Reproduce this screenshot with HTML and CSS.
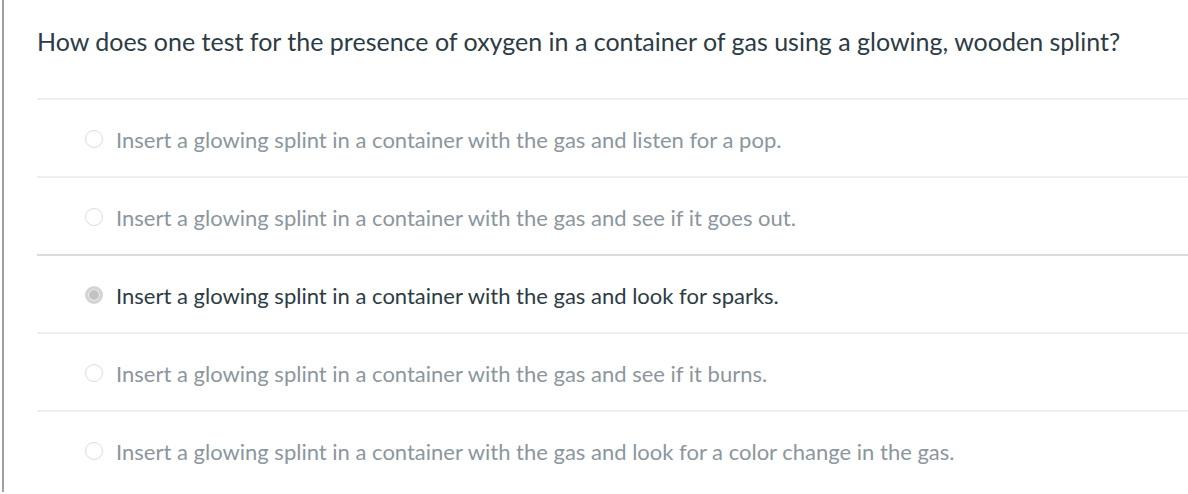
FILE: index.html
```html
<!DOCTYPE html>
<html>
<head>
<meta charset="utf-8">
<link rel="stylesheet" href="styles.css">
</head>
<body>
<div class="quiz">
  <div class="question">How does one test for the presence of oxygen in a container of gas using a glowing, wooden splint?</div>
  <div class="answers">
    <div class="answer"><span class="radio"></span><span class="label">Insert a glowing splint in a container with the gas and listen for a pop.</span></div>
    <div class="answer"><span class="radio"></span><span class="label">Insert a glowing splint in a container with the gas and see if it goes out.</span></div>
    <div class="answer selected"><span class="radio"></span><span class="label">Insert a glowing splint in a container with the gas and look for sparks.</span></div>
    <div class="answer"><span class="radio"></span><span class="label">Insert a glowing splint in a container with the gas and see if it burns.</span></div>
    <div class="answer"><span class="radio"></span><span class="label">Insert a glowing splint in a container with the gas and look for a color change in the gas.</span></div>
  </div>
</div>
</body>
</html>
```
FILE: styles.css
```css
html, body {
  margin: 0;
  padding: 0;
  background: #fff;
}
body {
  font-family: Lato, "Liberation Sans", sans-serif;
}
.quiz {
  margin-left: 2px;
  border-left: 2px solid #a0a0a0;
  height: 492px;
  padding-left: 33px;
  overflow: hidden;
}
.question {
  font-size: 25px;
  color: #2d3b45;
  line-height: 28px;
  padding-top: 27px;
  height: 98px;
  box-sizing: border-box;
  white-space: nowrap;
}
.answers {
  display: flex;
  flex-direction: column;
}
.answer {
  display: flex;
  align-items: center;
  height: 74px;
  border-top: 2px solid #eeeeee;
  padding-left: 48px;
  padding-top: 2px;
  box-sizing: content-box;
  gap: 13px;
  font-size: 22px;
  color: #8b969e;
  white-space: nowrap;
}
.answer.selected {
  color: #2d3b45;
}
.answer:nth-child(3) {
  border-top-color: #dcdcdc;
}
.radio {
  width: 18px;
  height: 18px;
  border-radius: 50%;
  border: 1px solid #dcdcdc;
  box-sizing: border-box;
  flex: none;
}
.selected .radio {
  border: 3px solid #d4d4d4;
  background: #c2c2c2;
  box-shadow: inset 0 0 0 1px #f4f4f4;
}
```
